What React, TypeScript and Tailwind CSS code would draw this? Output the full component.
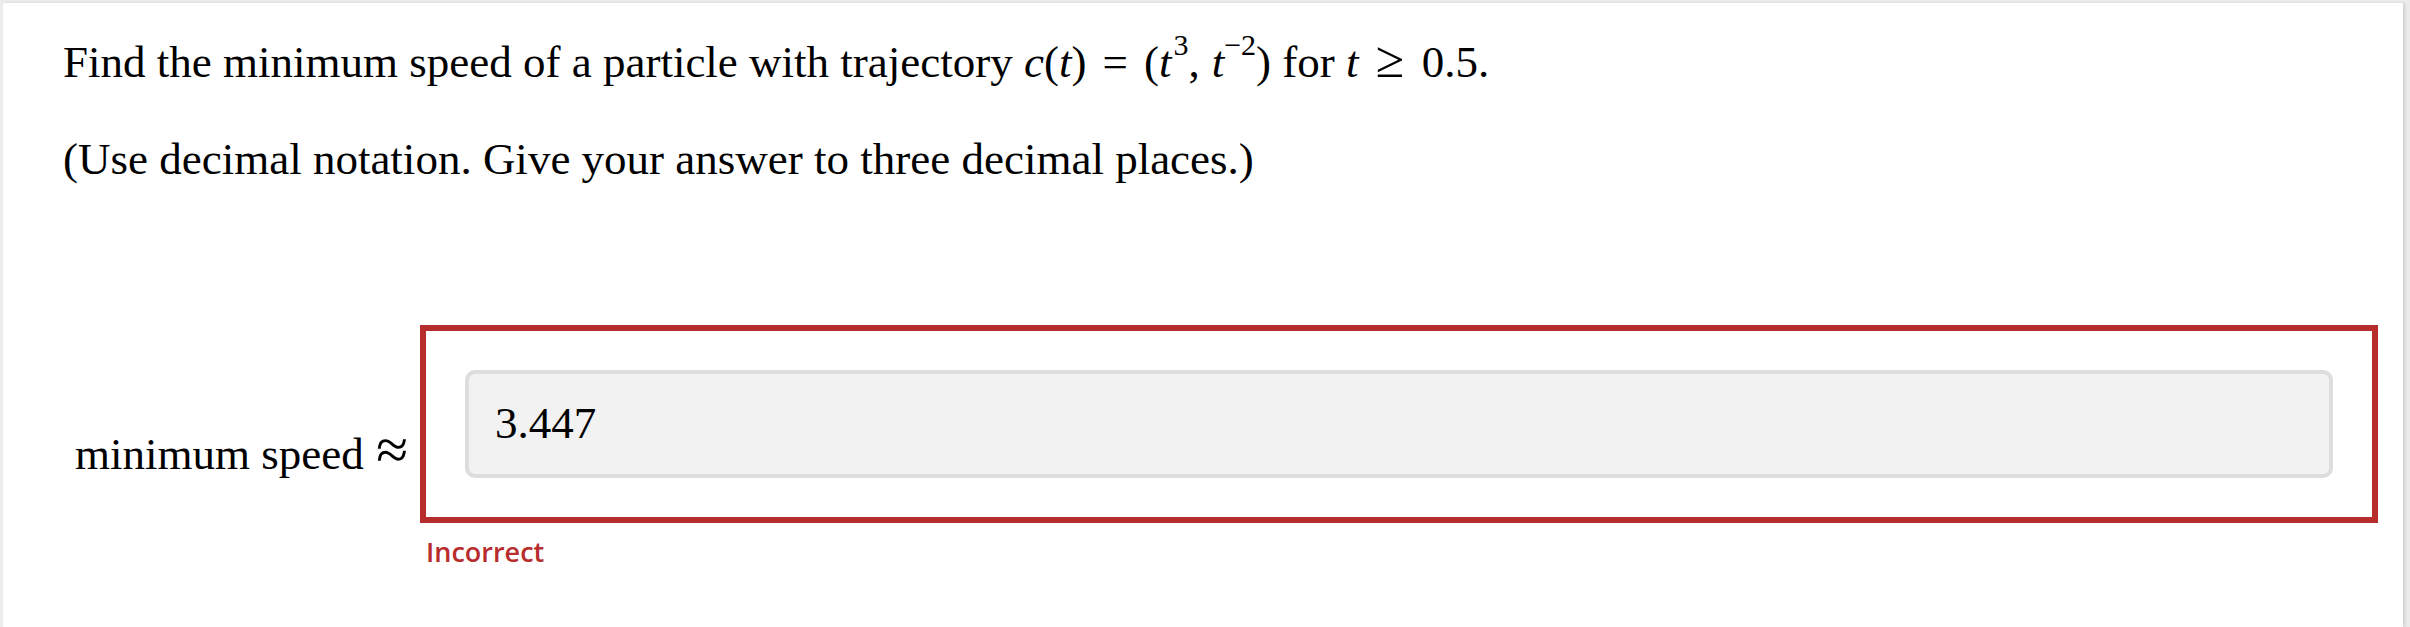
export default function App() {
  return (
    <div className="min-h-screen bg-[#ececec] pt-[3px] pl-[3px] pr-[7px]">
      <div className="min-h-[624px] bg-white shadow-[2px_0_3px_rgba(0,0,0,0.12)] pl-[60px] pt-[26px] font-['Liberation_Serif',serif] text-[45px] text-black">
        {/* Question text */}
        <p className="whitespace-nowrap">
          Find the minimum speed of a particle with trajectory{" "}
          <span className="italic">c</span>(<span className="italic">t</span>)
          <span className="px-[16px]">=</span>(<span className="italic">t</span>
          <span className="pl-[2px] text-[30px] leading-none align-[22px]">3</span>
          <span className="pr-[12px]">,</span>
          <span className="italic">t</span>
          <span className="text-[30px] leading-none align-[22px]">−2</span>) for{" "}
          <span className="italic">t</span>{" "}
          <span className="px-[6px] text-[52px] leading-none">≥</span> 0.5.
        </p>
        <p className="mt-[29px]">(Use decimal notation. Give your answer to three decimal places.)</p>

        {/* Answer row */}
        <div className="mt-[132px] flex items-start">
          <div className="mt-[96px] ml-[12px] flex w-[345px] items-baseline whitespace-nowrap">
            <span>minimum speed</span>
            <span className="ml-auto mr-[12px] text-[58px] leading-none">≈</span>
          </div>
          <div className="flex flex-col">
            <div className="w-[1958px] border-[6px] border-[#b72c2c] p-[39px]">
              <div className="flex h-[108px] items-center rounded-[10px] border-[4px] border-[#dddddd] bg-[#f2f2f2] px-[26px]">
                3.447
              </div>
            </div>
            <span className="mt-[9px] ml-[6px] font-['Open_Sans',sans-serif] text-[27px] font-semibold text-[#b72c2c]">
              Incorrect
            </span>
          </div>
        </div>
      </div>
    </div>
  );
}
